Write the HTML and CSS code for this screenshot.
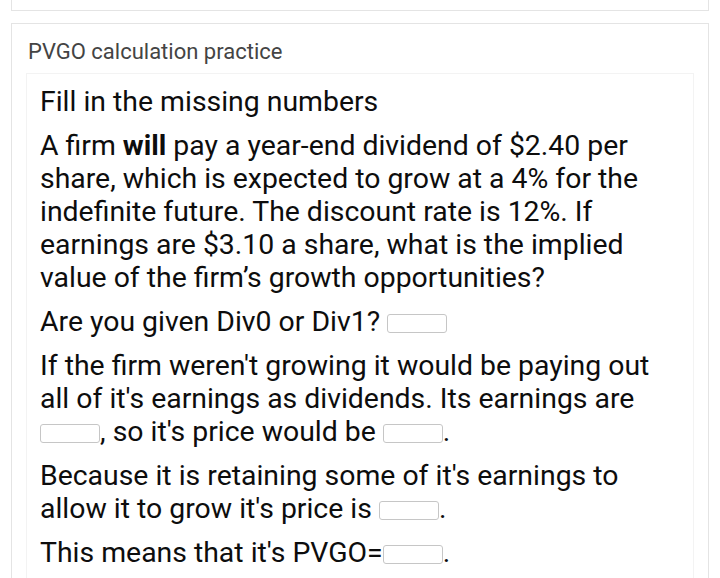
FILE: index.html
```html
<!DOCTYPE html>
<html lang="en">
<head>
    <meta charset="UTF-8">
    <meta name="viewport" content="width=device-width, initial-scale=1.0">
    <title>PVGO calculation practice</title>
    <link rel="stylesheet" href="styles.css">
</head>
<body>

    <div class="card cardTop"></div>

    <div class="card">
        <h2 class="cardTitle">PVGO calculation practice</h2>

        <div class="question">
            <p>Fill in the missing numbers</p>

            <p>A firm <strong>will</strong> pay a year-end dividend of $2.40 per share, which is expected to grow at a 4% for the indefinite future. The discount rate is 12%. If earnings are $3.10 a share, what is the implied value of the firm&rsquo;s growth opportunities?</p>

            <p>Are you given Div0 or Div1? <input type="text" class="answer"></p>

            <p>If the firm weren't growing it would be paying out all of it's earnings as dividends. Its earnings are <input type="text" class="answer">, so it's price would be <input type="text" class="answer">.</p>

            <p>Because it is retaining some of it's earnings to allow it to grow it's price is <input type="text" class="answer">.</p>

            <p>This means that it's PVGO=<input type="text" class="answer">.</p>
        </div>
    </div>

</body>
</html>
```

FILE: styles.css
```css
body {
    font-family: 'Roboto', 'Liberation Sans', sans-serif;
    margin: 0;
    padding: 0 11px;
    background-color: #fff;
}

.card {
    border: 1px solid #e4e4e4;
    background-color: #fff;
    padding: 15px 14px 0 14px;
}

.cardTop {
    height: 10px;
    padding: 0;
    border-top: none;
    margin-bottom: 12px;
}

.cardTitle {
    font-size: 22px;
    font-weight: normal;
    color: #444;
    margin: 0 0 9px 2px;
}

.question {
    border: 1px solid #f3f3f3;
    padding: 0 15px 0 13px;
    font-size: 28.4px;
    color: #0d0d0d;
}

.question p {
    margin: 11px 0;
}

.question strong {
    font-weight: bold;
}

.answer {
    width: 56px;
    height: 17px;
    padding: 0 1px;
    border: 1px solid #c6c6c6;
    border-radius: 3px;
    background-color: #fff;
    vertical-align: middle;
    margin: 0;
}
```
